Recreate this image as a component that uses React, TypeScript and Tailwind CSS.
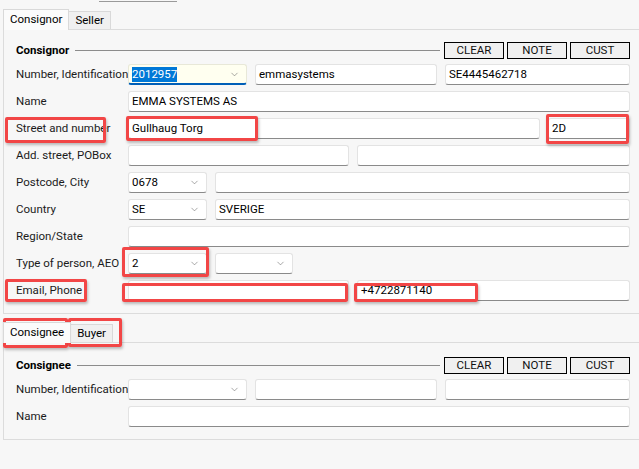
import { ChevronDown } from 'lucide-react';

const FONT = { fontFamily: 'Roboto, "Liberation Sans", sans-serif' };

function Field({ value = '', className = '' }: { value?: string; className?: string }) {
  return (
    <div
      className={`h-[21px] flex items-center px-[3px] bg-white border border-[#e3e3e3] border-b-[#8a8a8a] rounded-[3px] text-[11.5px] text-black whitespace-nowrap overflow-hidden ${className}`}
    >
      {value}
    </div>
  );
}

function Combo({ value = '', className = '', focused = false }: { value?: string; className?: string; focused?: boolean }) {
  return (
    <div
      className={`h-[21px] flex items-center justify-between pl-[3px] pr-[6px] rounded-[3px] text-[11.5px] text-black border ${
        focused
          ? 'bg-[#fffff0] border-[#e8e8d8] border-b-2 border-b-[#005fb8]'
          : 'bg-white border-[#e3e3e3] border-b-[#8a8a8a]'
      } ${className}`}
    >
      {focused ? <span className="bg-[#0078d7] text-white leading-[15px]">{value}</span> : <span>{value}</span>}
      <ChevronDown size={11} strokeWidth={1.2} className="text-[#606060]" />
    </div>
  );
}

function Row({ label, children }: { label: string; children: React.ReactNode }) {
  return (
    <div className="flex items-center h-[21px]">
      <div className="w-[112px] shrink-0 text-[11.5px] text-[#1b1b1b] whitespace-nowrap">{label}</div>
      <div className="flex-1 flex items-center gap-2">{children}</div>
    </div>
  );
}

function Heading({ title }: { title: string }) {
  return (
    <div className="flex items-center h-[17px]">
      <span className="text-[11.5px] font-bold text-black pr-[6px]">{title}</span>
      <div className="flex-1 h-px bg-[#8c8c8c] mr-1" />
      <div className="flex gap-[3px]">
        {['CLEAR', 'NOTE', 'CUST'].map(b => (
          <button
            key={b}
            className="w-[60px] h-[17px] border border-black bg-[#f0f0f0] text-[11.5px] leading-none text-[#111]"
          >
            {b}
          </button>
        ))}
      </div>
    </div>
  );
}

function Tabs({ tabs }: { tabs: string[] }) {
  return (
    <div className="flex items-end h-[21px] pl-[3px]">
      {tabs.map((t, i) =>
        i === 0 ? (
          <div
            key={t}
            className="h-[21px] px-[6px] flex items-center bg-[#fbfbfb] border border-[#d9d9d9] border-b-0 text-[11.5px] text-black relative z-10 -mb-px"
          >
            {t}
          </div>
        ) : (
          <div
            key={t}
            className="h-[18px] px-[6px] flex items-center bg-[#f0f0f0] border border-l-0 border-[#d9d9d9] border-b-0 text-[11.5px] text-black"
          >
            {t}
          </div>
        )
      )}
    </div>
  );
}

function Mark({ className }: { className: string }) {
  return (
    <div
      className={`absolute border-[3px] border-[#f24646] rounded-[2px] shadow-[1px_2px_3px_rgba(0,0,0,0.25)] pointer-events-none ${className}`}
    />
  );
}

export default function App() {
  return (
    <div className="relative w-[639px] h-[469px] bg-[#f7f7f7] overflow-hidden" style={FONT}>
      {/* top cut-off field */}
      <div className="h-[8px]">
        <div className="ml-[99px] w-[78px] h-[2px] border-b border-[#9a9a9a]" />
      </div>

      <Tabs tabs={['Consignor', 'Seller']} />
      <div className="ml-[3px] w-[640px] border border-[#dcdcdc] pl-[12px] pr-[12px] pt-[12px] pb-[12px] flex flex-col gap-[5px]">
        <Heading title="Consignor" />
        <div className="flex flex-col gap-[6px]">
          <Row label="Number, Identification">
            <Combo value="2012957" focused className="w-[119px]" />
            <Field value="emmasystems" className="w-[182px]" />
            <Field value="SE4445462718" className="flex-1" />
          </Row>
          <Row label="Name">
            <Field value="EMMA SYSTEMS AS" className="flex-1" />
          </Row>
          <Row label="Street and number">
            <Field value="Gullhaug Torg" className="w-[412px]" />
            <Field value="2D" className="flex-1" />
          </Row>
          <Row label="Add. street, POBox">
            <Field className="w-[221px]" />
            <Field className="flex-1" />
          </Row>
          <Row label="Postcode, City">
            <Combo value="0678" className="w-[79px]" />
            <Field className="flex-1" />
          </Row>
          <Row label="Country">
            <Combo value="SE" className="w-[79px]" />
            <Field value="SVERIGE" className="flex-1" />
          </Row>
          <Row label="Region/State">
            <Field className="flex-1" />
          </Row>
          <Row label="Type of person, AEO">
            <Combo value="2" className="w-[79px]" />
            <Combo className="w-[78px]" />
          </Row>
          <Row label="Email, Phone">
            <Field className="w-[221px]" />
            <Field value="+4722871140" className="flex-1" />
          </Row>
        </div>
      </div>

      <div className="h-[7px]" />
      <Tabs tabs={['Consignee', 'Buyer']} />
      <div className="ml-[3px] w-[640px] border border-[#dcdcdc] pl-[12px] pr-[12px] pt-[14px] pb-[12px] flex flex-col gap-[5px]">
        <Heading title="Consignee" />
        <div className="flex flex-col gap-[6px]">
          <Row label="Number, Identification">
            <Combo className="w-[119px]" />
            <Field className="w-[182px]" />
            <Field className="flex-1" />
          </Row>
          <Row label="Name">
            <Field className="flex-1" />
          </Row>
        </div>
      </div>

      {/* annotations */}
      <Mark className="left-[5px] top-[117px] w-[101px] h-[26px]" />
      <Mark className="left-[126px] top-[116px] w-[132px] h-[25px]" />
      <Mark className="left-[546px] top-[114px] w-[83px] h-[30px]" />
      <Mark className="left-[122px] top-[247px] w-[87px] h-[30px]" />
      <Mark className="left-[5px] top-[279px] w-[82px] h-[23px]" />
      <Mark className="left-[122px] top-[283px] w-[226px] h-[19px]" />
      <Mark className="left-[354px] top-[283px] w-[124px] h-[19px]" />
      <Mark className="left-[3px] top-[318px] w-[65px] h-[30px]" />
      <Mark className="left-[68px] top-[318px] w-[54px] h-[29px]" />
    </div>
  );
}
